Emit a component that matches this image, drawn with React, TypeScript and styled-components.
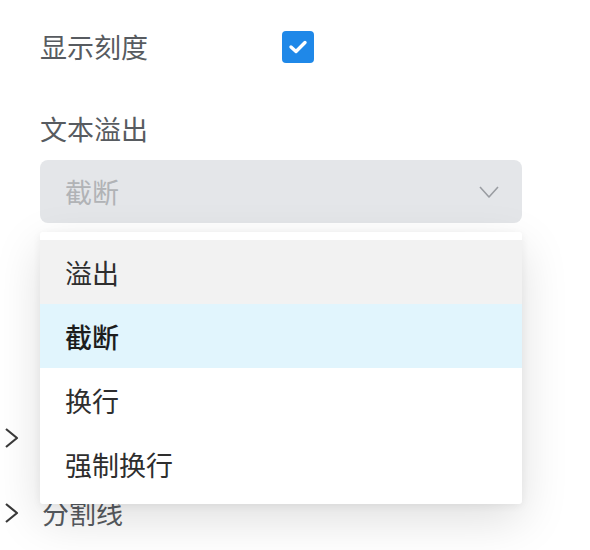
import React from "react";
import styled, { createGlobalStyle } from "styled-components";

const GlobalStyle = createGlobalStyle`
    body {
        margin: 0;
        background: #ffffff;
        font-family: "Noto Sans CJK SC", "Noto Sans", sans-serif;
    }
`;

interface IOption {
    value: string;
    label: string;
}

const options: IOption[] = [
    { value: "overflow", label: "溢出" },
    { value: "ellipsis", label: "截断" },
    { value: "wrap", label: "换行" },
    { value: "break", label: "强制换行" },
];

const CheckIcon = () => (
    <svg width="20" height="16" viewBox="0 0 20 16" fill="none">
        <polyline
            points="3,8 8,12.5 17,3.5"
            stroke="#fff"
            strokeWidth="3.4"
            strokeLinecap="round"
            strokeLinejoin="round"
        />
    </svg>
);

const ChevronDown = () => (
    <svg width="22" height="16" viewBox="0 0 22 16" fill="none">
        <polyline
            points="2,3 11,13 20,3"
            stroke="#9a9da2"
            strokeWidth="1.6"
            strokeLinejoin="round"
        />
    </svg>
);

const ChevronRight = () => (
    <svg width="17" height="22" viewBox="0 0 17 22" fill="none">
        <polyline
            points="3,2 14,11 3,20"
            stroke="#3a3a3a"
            strokeWidth="2.2"
            strokeLinejoin="round"
        />
    </svg>
);

const App = () => {
    const hovered = "overflow";
    const selected = "ellipsis";
    return (
        <>
            <GlobalStyle />
            <Panel>
                <CheckRow>
                    <Label>显示刻度</Label>
                    <Checkbox>
                        <CheckIcon />
                    </Checkbox>
                </CheckRow>
                <FieldLabel>文本溢出</FieldLabel>
                <SelectWrap>
                    <SelectBox>
                        <SelectValue>截断</SelectValue>
                        <ChevronDown />
                    </SelectBox>
                    <Menu>
                        {options.map((opt) => (
                            <MenuItem
                                key={opt.value}
                                $hover={opt.value === hovered}
                                $active={opt.value === selected}
                            >
                                {opt.label}
                            </MenuItem>
                        ))}
                    </Menu>
                </SelectWrap>
                <Sections>
                    {/* 메뉴 아래에 가려진 접힌 섹션 */}
                    <SectionRow>
                        <Arrow>
                            <ChevronRight />
                        </Arrow>
                    </SectionRow>
                    <SectionRow>
                        <Arrow>
                            <ChevronRight />
                        </Arrow>
                        <SectionTitle>分割线</SectionTitle>
                    </SectionRow>
                </Sections>
            </Panel>
        </>
    );
};

const Panel = styled.div`
    width: 590px;
    height: 550px;
    box-sizing: border-box;
    padding: 31px 68px 0 40px;
    overflow: hidden;
`;

const CheckRow = styled.div`
    display: flex;
    align-items: center;
    height: 32px;
`;

const Label = styled.span`
    width: 242px;
    font-size: 27px;
    line-height: 32px;
    color: #575b60;
`;

const Checkbox = styled.span`
    width: 32px;
    height: 32px;
    border-radius: 4px;
    background: #1f88e8;
    display: flex;
    align-items: center;
    justify-content: center;
`;

const FieldLabel = styled.div`
    margin-top: 48px;
    font-size: 27px;
    line-height: 36px;
    color: #575b60;
`;

const SelectWrap = styled.div`
    position: relative;
    margin-top: 13px;
`;

const SelectBox = styled.div`
    height: 63px;
    box-sizing: border-box;
    padding: 0 22px 0 25px;
    border-radius: 8px;
    background: #e4e6e9;
    display: flex;
    align-items: center;
    justify-content: space-between;
`;

const SelectValue = styled.span`
    font-size: 27px;
    color: #b1b3b6;
`;

const Menu = styled.ul`
    position: absolute;
    top: calc(100% + 9px);
    left: 0;
    right: 0;
    margin: 0;
    padding: 8px 0;
    list-style: none;
    background: #fff;
    border-radius: 3px;
    box-shadow: 0 16px 48px rgba(0, 0, 0, 0.13), 0 2px 8px rgba(0, 0, 0, 0.06);
    z-index: 10;
`;

const MenuItem = styled.li<{ $hover?: boolean; $active?: boolean }>`
    height: 64px;
    padding-left: 25px;
    display: flex;
    align-items: center;
    font-size: 27px;
    color: ${(props) => (props.$active ? "#1d1d1d" : "#2e2e2e")};
    font-weight: ${(props) => (props.$active ? 500 : 400)};
    background: ${(props) =>
        props.$active ? "#e1f5fd" : props.$hover ? "#f2f2f2" : "#fff"};
`;

const Sections = styled.div`
    margin-top: 177px;
    margin-left: -40px;
`;

const SectionRow = styled.div`
    display: flex;
    align-items: center;
    height: 75px;
`;

const Arrow = styled.span`
    width: 42px;
    padding-left: 3px;
    box-sizing: border-box;
    display: flex;
    align-items: center;
`;

const SectionTitle = styled.span`
    font-size: 27px;
    color: #575b60;
`;

export default App;
